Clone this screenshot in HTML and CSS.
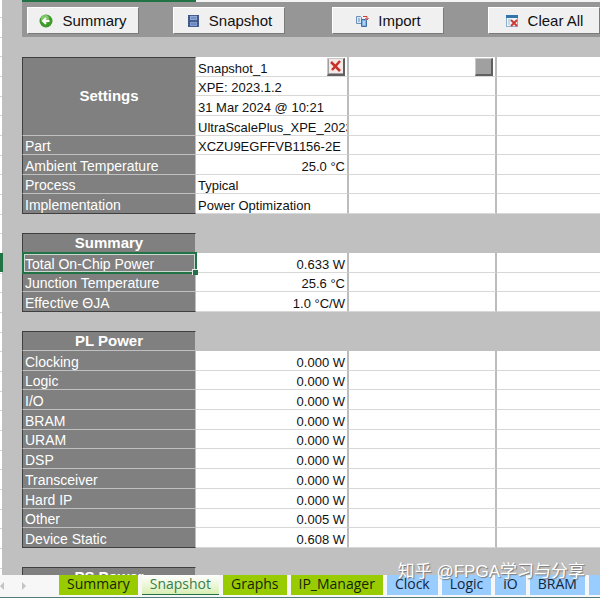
FILE: index.html
```html
<!DOCTYPE html>
<html lang="en">
<head>
    <meta charset="UTF-8">
    <meta name="viewport" content="width=device-width, initial-scale=1.0">
    <title>XPE - Snapshot</title>
    <link rel="stylesheet" href="styles.css">
</head>
<body>
    <main class="sheet">
        <div class="toolbar">
            <button type="button" class="tool">
                <svg width="14" height="14" viewBox="0 0 14 14">
                    <circle cx="7" cy="7" r="6.500" fill="#3f9a2c"/>
                    <circle cx="6" cy="5" r="4" fill="#83c86c"/>
                    <path d="M10.500 7H4.500M7 4L4 7l3 3" fill="none" stroke="#fff" stroke-width="1.800"/>
                </svg>
                Summary
            </button>
            <button type="button" class="tool">
                <svg width="14" height="14" viewBox="0 0 14 14">
                    <rect x="2" y="1" width="11" height="12" fill="#4a5f8f"/>
                    <rect x="4" y="2" width="7" height="4" fill="#8fa8d8"/>
                    <rect x="4" y="8" width="7" height="4" fill="#7f9bd0"/>
                    <path d="M3 1v12M12 1v12" stroke="#35466f" stroke-dasharray="1 1"/>
                    <path d="M5 4h5M5 10h5" stroke="#5a76b4"/>
                </svg>
                Snapshot
            </button>
            <button type="button" class="tool">
                <svg width="14" height="14" viewBox="0 0 14 14">
                    <path d="M1.500 2.500h4l1 1v6h-5z" fill="#dbe9f7" stroke="#6b8fb8"/>
                    <path d="M3 5h2M3 7h2" stroke="#6b8fb8"/>
                    <path d="M6.500 5.500h4l1 1v6h-5z" fill="#7fb2e2" stroke="#3c6ea5"/>
                    <path d="M8 8h2M8 10h2" stroke="#e6f1fb"/>
                    <path d="M8 2.500h4v3M10.500 4l1.500 2 1.500-2" fill="none" stroke="#c8403c"/>
                </svg>
                Import
            </button>
            <button type="button" class="tool">
                <svg width="14" height="14" viewBox="0 0 14 14">
                    <rect x="1.500" y="1.500" width="11" height="11" fill="#eef5fb" stroke="#8fb0cc"/>
                    <rect x="1" y="1" width="12" height="3" fill="#3474ac"/>
                    <path d="M3 6h3M3 8h2M3 10h2" stroke="#9dbad4"/>
                    <path d="M6 6l6 6M12 6l-6 6" stroke="#cc3a34" stroke-width="2"/>
                </svg>
                Clear All
            </button>
        </div>

        <!-- Settings -->
        <table class="block rows-8">
            <colgroup><col class="col-label"><col class="col-value"><col class="col-empty"><col></colgroup>
            <tbody>
                <tr>
                    <th class="title" rowspan="4">Settings</th>
                    <td>
                        <div class="slot">
                            <span>Snapshot_1</span>
                            <button type="button" class="mark" aria-label="Delete snapshot">
                                <svg width="14" height="14" viewBox="0 0 14 14">
                                    <rect width="14" height="14" fill="#f4e9e6"/>
                                    <path d="M2 3l9 9M11 2L3 11" fill="none" stroke="#c8302a" stroke-width="2.500"/>
                                </svg>
                            </button>
                        </div>
                    </td>
                    <td>
                        <div class="slot end">
                            <button type="button" class="mark" aria-label="Empty snapshot"></button>
                        </div>
                    </td>
                    <td></td>
                </tr>
                <tr><td>XPE: 2023.1.2</td><td></td><td></td></tr>
                <tr><td>31 Mar 2024 @ 10:21</td><td></td><td></td></tr>
                <tr><td>UltraScalePlus_XPE_2023</td><td></td><td></td></tr>
                <tr><th>Part</th><td>XCZU9EGFFVB1156-2E</td><td></td><td></td></tr>
                <tr><th>Ambient Temperature</th><td class="num">25.0 °C</td><td></td><td></td></tr>
                <tr><th>Process</th><td>Typical</td><td></td><td></td></tr>
                <tr><th>Implementation</th><td>Power Optimization</td><td></td><td></td></tr>
            </tbody>
        </table>

        <!-- Summary -->
        <table class="block rows-4">
            <colgroup><col class="col-label"><col class="col-value"><col class="col-empty"><col></colgroup>
            <thead>
                <tr><th class="title">Summary</th></tr>
            </thead>
            <tbody>
                <tr><th class="selected">Total On-Chip Power<span class="row-mark"></span></th><td class="num">0.633 W</td><td></td><td></td></tr>
                <tr><th>Junction Temperature</th><td class="num">25.6 °C</td><td></td><td></td></tr>
                <tr><th>Effective ΘJA</th><td class="num">1.0 °C/W</td><td></td><td></td></tr>
            </tbody>
        </table>

        <!-- PL Power -->
        <table class="block rows-11">
            <colgroup><col class="col-label"><col class="col-value"><col class="col-empty"><col></colgroup>
            <thead>
                <tr><th class="title">PL Power</th></tr>
            </thead>
            <tbody>
                <tr><th>Clocking</th><td class="num">0.000 W</td><td></td><td></td></tr>
                <tr><th>Logic</th><td class="num">0.000 W</td><td></td><td></td></tr>
                <tr><th>I/O</th><td class="num">0.000 W</td><td></td><td></td></tr>
                <tr><th>BRAM</th><td class="num">0.000 W</td><td></td><td></td></tr>
                <tr><th>URAM</th><td class="num">0.000 W</td><td></td><td></td></tr>
                <tr><th>DSP</th><td class="num">0.000 W</td><td></td><td></td></tr>
                <tr><th>Transceiver</th><td class="num">0.000 W</td><td></td><td></td></tr>
                <tr><th>Hard IP</th><td class="num">0.000 W</td><td></td><td></td></tr>
                <tr><th>Other</th><td class="num">0.005 W</td><td></td><td></td></tr>
                <tr><th>Device Static</th><td class="num">0.608 W</td><td></td><td></td></tr>
            </tbody>
        </table>

        <!-- PS Power -->
        <table class="block">
            <colgroup><col class="col-label"><col class="col-value"><col class="col-empty"><col></colgroup>
            <thead>
                <tr><th class="title">PS Power</th></tr>
            </thead>
        </table>
    </main>

    <nav class="tabs">
        <div class="arrows">
            <button type="button" aria-label="Previous sheet"><svg width="4" height="8" viewBox="0 0 4 8"><path d="M4 0v8L0 4z" fill="#c4c4c4"/></svg></button>
            <button type="button" aria-label="Next sheet"><svg width="4" height="8" viewBox="0 0 4 8"><path d="M0 0v8l4-4z" fill="#c4c4c4"/></svg></button>
        </div>
        <a class="tab green" href="#summary">Summary</a>
        <a class="tab active" href="#snapshot">Snapshot</a>
        <a class="tab green" href="#graphs">Graphs</a>
        <a class="tab green" href="#ip-manager">IP_Manager</a>
        <a class="tab blue" href="#clock">Clock</a>
        <a class="tab blue" href="#logic">Logic</a>
        <a class="tab blue" href="#io">iO</a>
        <a class="tab blue" href="#bram">BRAM</a>
        <a class="tab blue more" href="#more" aria-label="More sheets"></a>
    </nav>

    <div class="watermark">知乎 @FPGA学习与分享</div>
</body>
</html>
```
FILE: styles.css
```css
* {
    box-sizing: border-box;
}

body {
    margin: 0;
    height: 100vh;
    display: flex;
    flex-direction: column;
    position: relative;
    overflow: hidden;
    font-family: "Liberation Sans", Arial, sans-serif;
    font-size: 13px;
    color: #111;
    background: #c0c0c0;
}

button {
    font-family: inherit;
    color: inherit;
    padding: 0;
}

/* worksheet */
.sheet {
    flex: 1;
    min-height: 0;
    overflow: hidden;
    padding-left: 22px;
    /* narrow strip of grid left of the grey area */
    background: linear-gradient(#fff 17px, #d4d4d4 17px, #d4d4d4 18px, #fff 18px, #fff 37px, #d4d4d4 37px, #d4d4d4 38px, #fff 38px, #fff 56px, #d4d4d4 56px, #d4d4d4 57px, #fff 57px) 0 0 / 2px 59px repeat-y, #c0c0c0;
}

.toolbar {
    display: grid;
    grid-template-columns: 146px 159px 156px auto;
    position: relative;
    height: 37px;
    margin-bottom: 20px;
    padding: 5px 0 4px 5px;
    border-top: 2px solid #f4f4f4;
    background: #969696;
}

.toolbar::before {
    content: "";
    position: absolute;
    top: -2px;
    left: 0;
    width: 174px;
    height: 2px;
    background: #217346;
}

.tool {
    display: flex;
    align-items: center;
    justify-content: center;
    gap: 9px;
    width: 112px;
    height: 27px;
    border: 1px solid #fff;
    border-right-color: #7a7a7a;
    border-bottom-color: #7a7a7a;
    background: #f0f0f0;
    font-size: 15px;
    white-space: nowrap;
}

/* tables */
.block {
    width: 100%;
    margin-bottom: 19px;
    table-layout: fixed;
    border-collapse: separate;
    border-spacing: 0;
}

.rows-8 {
    height: 157px;
}

.rows-4 {
    height: 79px;
}

.rows-11 {
    height: 217px;
}

.col-label {
    width: 174px;
}

.col-value {
    width: 153px;
}

.col-empty {
    width: 148px;
}

.block th,
.block td {
    height: 19px;
    padding: 0 2px;
    vertical-align: bottom;
    white-space: nowrap;
    overflow: hidden;
}

.block th {
    font-size: 14px;
    font-weight: normal;
    line-height: 16px;
    text-align: left;
    color: #fff;
    background: #808080;
    border-left: 1px solid #404040;
    border-right: 1px solid #c0c0c0;
    border-bottom: 1px solid #c0c0c0;
}

.block .title {
    font-size: 15px;
    font-weight: bold;
    text-align: center;
    vertical-align: middle;
    border-top: 1px solid #404040;
}

.block thead .title {
    height: 20px;
    line-height: 18px;
}

.block tbody tr:last-child th {
    border-bottom-color: #404040;
}

.block td {
    line-height: 15px;
    background: #fff;
    border-right: 2px solid #bcbcbc;
    border-bottom: 1px solid #d8d8d8;
}

.block td:last-child {
    border-right: none;
}

.block .num {
    text-align: right;
}

.block .selected {
    position: relative;
    overflow: visible;
    border-bottom-color: #808080;
}

.selected::before {
    content: "";
    position: absolute;
    inset: -1px -2px -2px -1px;
    border: 2px solid #217346;
    box-shadow: inset 0 0 0 1px #c8d8ce;
}

.selected::after {
    content: "";
    position: absolute;
    right: -3px;
    bottom: -3px;
    width: 5px;
    height: 5px;
    border: 1px solid #e8e8e8;
    border-right: none;
    border-bottom: none;
    background: #217346;
}

/* active row marker in the left strip */
.row-mark {
    position: absolute;
    top: 0;
    bottom: 0;
    left: -23px;
    width: 3px;
    background: #217346;
}

.slot {
    display: flex;
    align-items: center;
    justify-content: space-between;
    height: 18px;
}

.slot span {
    padding-top: 3px;
}

.slot.end {
    justify-content: flex-end;
}

.mark {
    display: flex;
    align-items: center;
    justify-content: center;
    width: 18px;
    height: 18px;
    border: 1px solid #c8c8c8;
    border-right: 2px solid #606060;
    border-bottom: 2px solid #606060;
    background: #a0a0a0;
}

/* sheet tabs */
.tabs {
    display: flex;
    gap: 4px;
    height: 23px;
    padding-bottom: 2px;
    overflow: hidden;
    border-bottom: 1px solid #4f7c78;
    background: #f7f7f7;
    font-family: "Open Sans", "Noto Sans", sans-serif;
    font-size: 14px;
}

.arrows {
    display: flex;
    flex: none;
    gap: 18px;
    width: 55px;
}

.arrows button {
    border: none;
    background: none;
}

.tab {
    flex: none;
    padding: 0 8px;
    line-height: 17px;
    color: #14250a;
    text-decoration: none;
}

.green {
    background: #99cc00;
}

.blue {
    color: #12263c;
    background: #99ccff;
}

.active {
    color: #3c7c4c;
    background: linear-gradient(#fff, #d9efb4);
    border-bottom: 1px solid #217346;
}

.more {
    flex: 1;
}

.watermark {
    position: absolute;
    right: 15px;
    bottom: 14px;
    font-family: "Liberation Sans", "Noto Sans CJK SC", sans-serif;
    font-size: 17px;
    line-height: 24px;
    color: #fff;
    text-shadow: 1px 1px 1px #777;
    pointer-events: none;
}
```
